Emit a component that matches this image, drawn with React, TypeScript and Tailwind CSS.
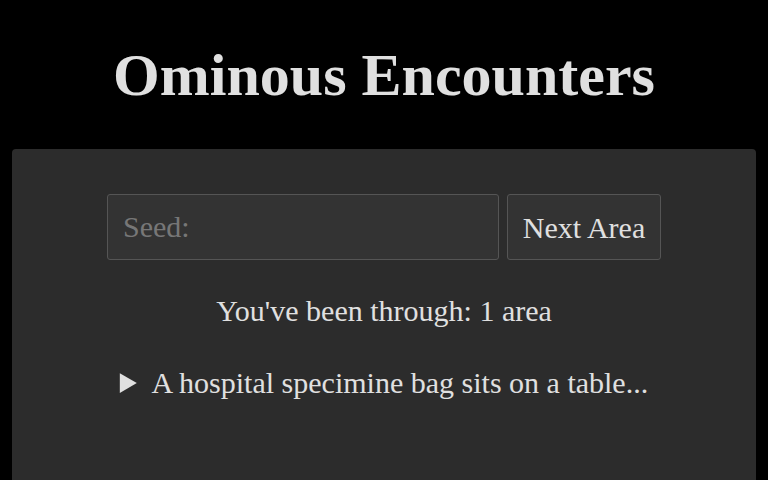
import React, { useState } from "react";

export default function App() {
  const [seed, setSeed] = useState("");
  const [areas] = useState(1);

  return (
    <div className="min-h-screen bg-black text-[#e0e0e0] font-['Liberation_Serif',serif]">
      <h1 className="pt-[42px] pb-[41px] text-center text-[60px] font-bold leading-[66px]">
        Ominous Encounters
      </h1>

      <div className="mx-3 min-h-[340px] rounded bg-[#2c2c2c] pt-[45px]">
        <div className="flex justify-center gap-2">
          <input
            value={seed}
            onChange={(e) => setSeed(e.target.value)}
            placeholder="Seed:"
            className="h-[66px] w-[392px] rounded-[3px] border border-[#555] bg-[#333] px-[15px] text-[30px] text-[#e0e0e0] outline-none placeholder:text-[#777]"
          />
          <button className="h-[66px] w-[154px] rounded-[3px] border border-[#555] bg-[#333] text-[30px] text-[#e0e0e0]">
            Next Area
          </button>
        </div>

        <p className="mt-[30px] text-center text-[30px] leading-[42px]">
          You've been through: {areas} area{areas === 1 ? "" : "s"}
        </p>

        <details className="mt-[30px] text-center text-[30px] leading-[42px]">
          <summary className="cursor-pointer">
            A hospital specimine bag sits on a table...
          </summary>
        </details>
      </div>
    </div>
  );
}
